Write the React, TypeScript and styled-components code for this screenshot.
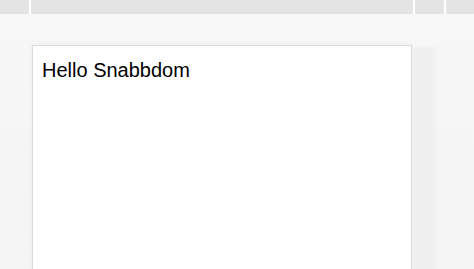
import React from "react";
import styled, { createGlobalStyle } from "styled-components";

const Global = createGlobalStyle`
  html, body { margin: 0; padding: 0; background: #f6f6f6; overflow: hidden; }
  body { font-family: "Liberation Sans", Arial, sans-serif; }
  *, *::before, *::after { box-sizing: border-box; }
`;

const Screen = styled.div`
  width: 474px;
  height: 269px;
  display: flex;
  flex-direction: column;
  background: linear-gradient(to bottom, #f9f9f9 0px, #f6f6f6 60px, #f5f5f5 100%);
  overflow: hidden;
`;

const TabBar = styled.div`
  height: 14px;
  display: flex;
  gap: 2px;
  background: #ffffff;
  flex-shrink: 0;
`;

const Tab = styled.div<{ $w?: number }>`
  background: #e4e4e4;
  ${(p) => (p.$w ? `width: ${p.$w}px;` : "flex: 1;")}
  flex-shrink: 0;
`;

const Stage = styled.div`
  flex: 1;
  display: flex;
  padding: 31px 0 0 32px;
`;

const Sheet = styled.div`
  width: 380px;
  background: #ffffff;
  border: 1px solid #dcdcdc;
  border-bottom: none;
  box-shadow: 24px 2px 3px #f0f0f0, 0 0 5px rgba(0, 0, 0, 0.05);
  padding: 13px 9px;
`;

const Heading = styled.div`
  font-size: 20px;
  color: #000;
`;

export default function App() {
  return (
    <>
      <Global />
      <Screen>
        <TabBar>
          <Tab $w={29} />
          <Tab />
          <Tab $w={29} />
          <Tab $w={28} />
        </TabBar>
        <Stage>
          <Sheet>
            <Heading>Hello Snabbdom</Heading>
          </Sheet>
        </Stage>
      </Screen>
    </>
  );
}
